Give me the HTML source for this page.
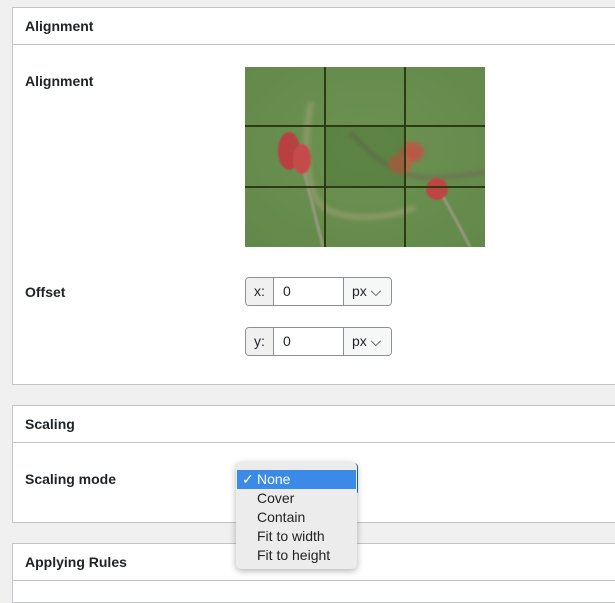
<!DOCTYPE html>
<html><head><style>
body{margin:0;width:615px;height:580px;background:#f0f0f1;font-family:"Liberation Sans",sans-serif;color:#1d2327;position:relative;overflow:hidden;font-size:14px}
.p{position:absolute;left:12px;width:610px;background:#fff;border:1px solid #c3c4c7;box-sizing:border-box}
.h{height:37px;border-bottom:1px solid #c3c4c7;font-weight:bold;font-size:14px;line-height:37px;padding-left:12px;box-sizing:border-box}
.l{position:absolute;font-weight:bold;font-size:14px}
.ig{position:absolute;left:245px;width:147px;height:29px;border:1px solid #8c8f94;border-radius:4px;box-sizing:border-box;display:flex;font-size:14px;line-height:27px;overflow:hidden}
.ig .a{width:27px;background:#f0f0f1;border-right:1px solid #8c8f94;text-align:center}
.ig .b{width:70px;padding-left:9px;box-sizing:border-box;border-right:1px solid #8c8f94}
.ig .c{flex:1;background:#f6f7f7;padding-left:8px}
.dd{position:absolute;left:236px;top:462px;width:121px;height:107px;background:#ececec;border-radius:5px;box-shadow:0 2px 7px rgba(0,0,0,.3);font-size:14px;color:#222}
.dd div{height:19px;line-height:19px;padding-left:21px}
</style></head><body>
<div class="p" style="top:7px;height:378px"><div class="h">Alignment</div></div>
<div class="l" style="left:25px;top:73px">Alignment</div>
<svg style="position:absolute;left:245px;top:67px" width="240" height="180" viewBox="0 0 240 180">
<defs><radialGradient id="g" cx="50%" cy="45%" r="70%"><stop offset="0" stop-color="#5a8440"/><stop offset="1" stop-color="#4d7636"/></radialGradient>
<filter id="bl"><feGaussianBlur stdDeviation="2.5"/></filter><filter id="b1"><feGaussianBlur stdDeviation="0.8"/></filter></defs>
<rect width="240" height="180" fill="url(#g)"/>
<g filter="url(#bl)">
<path d="M66 35 Q55 90 70 130 Q80 150 120 150 Q150 150 170 140" stroke="#a89a72" stroke-width="5" fill="none" opacity=".6"/>
<path d="M105 65 Q140 105 175 110 Q200 112 240 105" stroke="#5a5a3a" stroke-width="4" fill="none"/>
<ellipse cx="167" cy="85" rx="12" ry="10" fill="#b83a30"/>
<ellipse cx="155" cy="97" rx="11" ry="10" fill="#c04530"/>
</g>
<g filter="url(#b1)">
<path d="M58 100 Q68 140 78 180" stroke="#8a8a70" stroke-width="3" fill="none"/>
<path d="M195 125 Q210 150 225 180" stroke="#8a8a70" stroke-width="3" fill="none"/>
<ellipse cx="44" cy="84" rx="11" ry="19" fill="#b81e2c"/>
<ellipse cx="57" cy="92" rx="9" ry="15" fill="#c82a36"/>
<circle cx="192" cy="122" r="11" fill="#c0242e"/>
</g>
<rect x="0" y="0" width="240" height="180" fill="#b8d0a0" opacity=".2"/>
<rect x="80" y="60" width="80" height="60" fill="#2e5a1e" opacity=".25"/>
<g stroke="#2c3c10" stroke-width="2"><line x1="80" y1="0" x2="80" y2="180"/><line x1="160" y1="0" x2="160" y2="180"/><line x1="0" y1="59" x2="240" y2="59"/><line x1="0" y1="120" x2="240" y2="120"/></g>
</svg>
<div class="l" style="left:25px;top:284px">Offset</div>
<div class="ig" style="top:277px"><div class="a">x:</div><div class="b">0</div><div class="c">px ⌵</div></div>
<div class="ig" style="top:327px"><div class="a">y:</div><div class="b">0</div><div class="c">px ⌵</div></div>
<div class="p" style="top:405px;height:118px"><div class="h">Scaling</div></div>
<div class="l" style="left:25px;top:471px">Scaling mode</div>
<div style="position:absolute;left:236px;top:463px;width:122px;height:32px;border:1px solid #2271b1;border-radius:4px;box-sizing:border-box;background:#fff"></div>
<div class="p" style="top:543px;height:60px"><div class="h">Applying Rules</div></div>
<div class="dd"><div style="height:8px;padding:0"></div>
<div style="background:#3b8ae8;color:#fff;margin:0 1px;padding-left:20px;position:relative"><span style="position:absolute;left:5px">✓</span>None</div>
<div>Cover</div><div>Contain</div><div>Fit to width</div><div>Fit to height</div></div>
</body></html>
